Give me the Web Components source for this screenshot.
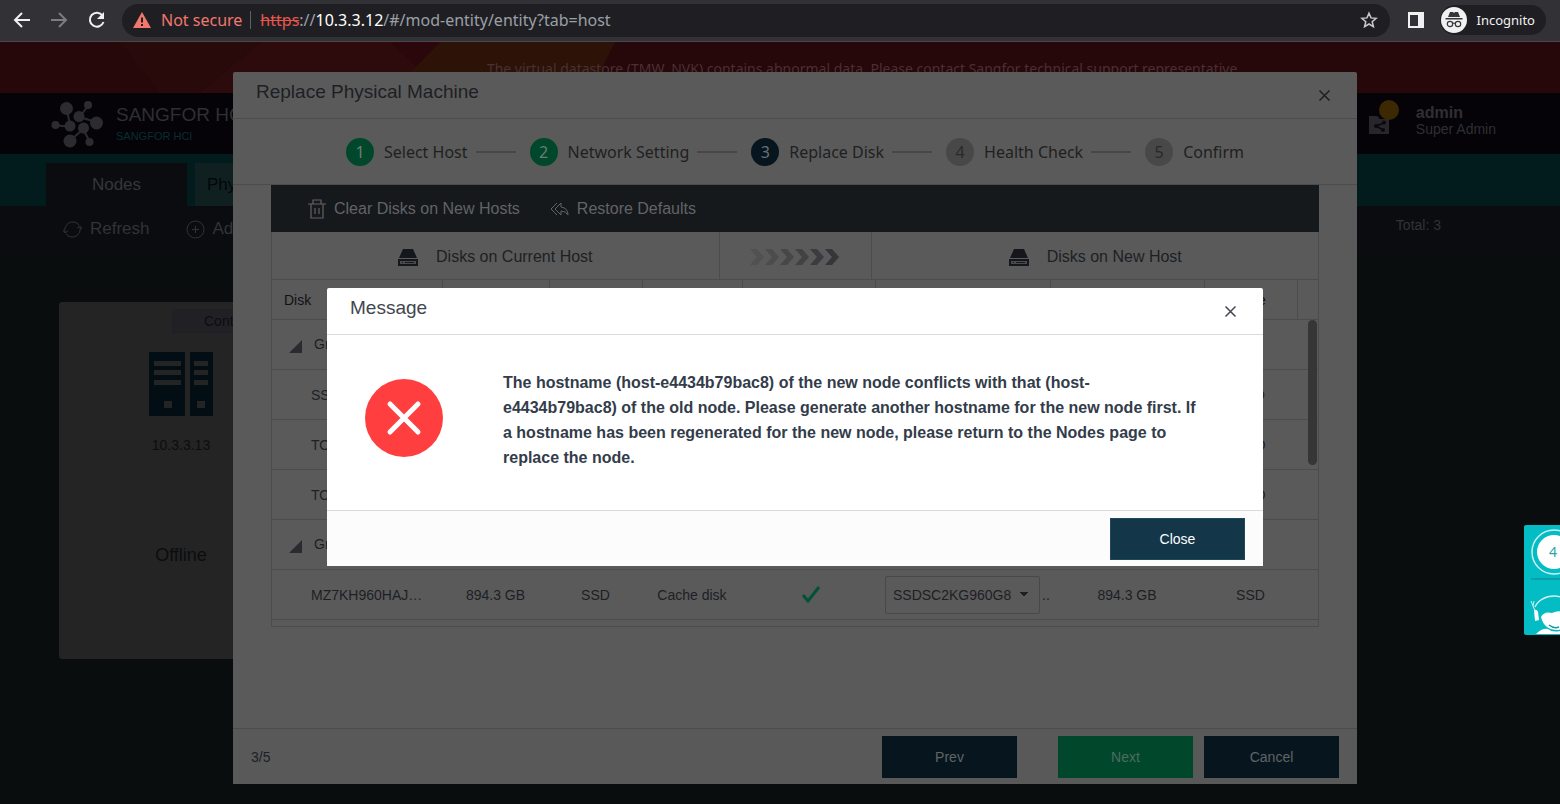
<!DOCTYPE html>
<html lang="en">
<head>
<meta charset="utf-8">
<title>SANGFOR HCI</title>
<style>
  html, body {
    height: 100%;
    margin: 0;
  }

  body {
    display: flex;
    flex-direction: column;
    overflow: hidden;
    background: #090d0e;
    font-family: "Liberation Sans", Arial, sans-serif;
    font-size: 14px;
    color: #1d1f24;
  }
</style>
</head>
<body>
<browser-bar></browser-bar>
<hci-shell>
  <alert-banner>The virtual datastore (TMW, NVK) contains abnormal data. Please contact Sangfor technical support representative.</alert-banner>
  <app-header></app-header>
  <nav-tabs></nav-tabs>
  <node-toolbar></node-toolbar>
  <node-card ip="10.3.3.13" state="Offline"></node-card>

  <modal-dialog slot="wizard" heading="Replace Physical Machine" dimmed>
    <wizard-steps></wizard-steps>
    <disk-toolbar></disk-toolbar>
    <disk-table></disk-table>
    <span slot="info">3/5</span>
    <action-button slot="actions" kind="dim" class="prev">Prev</action-button>
    <action-button slot="actions" kind="next">Next</action-button>
    <action-button slot="actions" kind="dim">Cancel</action-button>
  </modal-dialog>

  <modal-dialog slot="message" heading="Message">
    <error-message>The hostname (host-e4434b79bac8) of the new node conflicts with that (host-e4434b79bac8) of the old node. Please generate another hostname for the new node first. If a hostname has been regenerated for the new node, please return to the Nodes page to replace the node.</error-message>
    <action-button slot="actions">Close</action-button>
  </modal-dialog>

  <support-widget slot="support" count="4"></support-widget>
</hci-shell>

<script>
'use strict';

const render = (host, html) => {
  const template = document.createElement('template');
  template.innerHTML = html;
  host.attachShadow({ mode: 'open' }).appendChild(template.content.cloneNode(true));
};

class BrowserBar extends HTMLElement {
  constructor() {
    super();
    render(this, `
      <style>
        :host {
          display: flex;
          flex: none;
          align-items: center;
          box-sizing: border-box;
          height: 42px;
          padding: 0 14px 1px 11px;
          background: #313136;
          border-bottom: 1px solid #4a484c;
          font-family: "Noto Sans", "Open Sans", sans-serif;
          font-size: 16px;
          color: #9aa0a6;
        }
        button {
          display: flex;
          padding: 0;
          border: 0;
          background: none;
          font: inherit;
          color: #f1f1f1;
        }
        .nav {
          display: flex;
          gap: 17px;
          margin-right: 15px;
        }
        .address {
          display: flex;
          flex: 1;
          align-items: center;
          height: 33px;
          padding: 0 12px 0 10px;
          border-radius: 17px;
          background: #1f1f23;
        }
        .warn {
          align-items: center;
          gap: 9px;
          margin-right: 9px;
          padding-right: 8px;
          border-right: 1px solid #5f6064;
          line-height: 18px;
          color: #f2776d;
        }
        label { white-space: pre; }
        s { color: #e8554c; }
        b { font-weight: 400; color: #fff; }
        input {
          flex: 1;
          min-width: 0;
          padding: 0;
          border: 0;
          outline: 0;
          background: none;
          font: inherit;
          color: inherit;
        }
        .panel { margin: 0 15px 0 17px; }
        .incognito {
          align-items: center;
          gap: 10px;
          height: 30px;
          padding: 0 11px 0 1px;
          border-radius: 15px;
          background: #1f1f23;
          font-size: 13px;
        }
      </style>
      <div class="nav">
        <button aria-label="Back"><svg width="21" height="20" viewBox="0 0 21 20" fill="none" stroke="currentColor" stroke-width="2"><path d="M19 10H4M11 3L4 10l7 7"/></svg></button>
        <button aria-label="Forward" style="color:#7d7d80"><svg width="21" height="20" viewBox="0 0 21 20" fill="none" stroke="currentColor" stroke-width="2"><path d="M2 10h15M10 3l7 7-7 7"/></svg></button>
        <button aria-label="Reload"><svg width="20" height="20" viewBox="0 0 20 20" fill="none" stroke="currentColor" stroke-width="2"><path d="M15.500 5.500A7 7 0 1 0 16.500 12"/><path d="M17 2v7h-7z" fill="currentColor" stroke="none"/></svg></button>
      </div>
      <div class="address">
        <button class="warn"><svg width="20" height="18" viewBox="0 0 20 18"><path d="M10 1l9 16H1z" fill="#f2776d"/><path d="M10 6.500v5M10 13v2" stroke="#1f1f23" stroke-width="2"/></svg>Not secure</button>
        <label for="url"><s>https</s>://<b>10.3.3.12</b></label>
        <input id="url" value="/#/mod-entity/entity?tab=host">
        <button aria-label="Bookmark"><svg width="18" height="18" viewBox="0 0 18 18" fill="none" stroke="#c8c9cc" stroke-width="1.500"><path d="M9 2.200l2 4.700 5.100.4-3.900 3.400 1.200 5L9 13l-4.400 2.700 1.200-5L1.900 7.300 7 6.900z"/></svg></button>
      </div>
      <button class="panel" aria-label="Side panel"><svg width="18" height="18" viewBox="0 0 18 18"><path d="M1 1h16v16H1zM3 4v11h8V4z" fill="#f1f1f1" fill-rule="evenodd"/></svg></button>
      <button class="incognito">
        <svg width="26" height="26" viewBox="0 0 26 26"><circle cx="13" cy="13" r="13" fill="#f1f1f1"/><path d="M9 5h3l1 1 1-1h3l2 5H7zM4.500 11h17v1.500h-17z" fill="#36363a"/><g fill="none" stroke="#36363a" stroke-width="1.200"><circle cx="9" cy="17" r="2.700"/><circle cx="17" cy="17" r="2.700"/><path d="M11.700 16.500q1.300-1 2.600 0"/></g></svg>
        Incognito
      </button>
    `);
  }
}

/* Page area under the browser bar; runs a little past the right edge of the window */
class HciShell extends HTMLElement {
  constructor() {
    super();
    render(this, `
      <style>
        :host {
          position: relative;
          display: block;
          flex: 1;
          min-height: 0;
          width: calc(100% + 30px);
        }
        .layer {
          position: absolute;
          inset: 0;
          display: grid;
          justify-items: center;
          padding: 30px 20px 20px;
        }
        .wizard ::slotted(*) {
          width: 100%;
          max-width: 1124px;
        }
        .message {
          align-items: center;
          padding-bottom: 22px;
        }
        .message ::slotted(*) {
          width: 80%;
          max-width: 936px;
        }
        .support {
          position: absolute;
          right: 0;
          bottom: 169px;
        }
      </style>
      <slot></slot>
      <div class="layer wizard"><slot name="wizard"></slot></div>
      <div class="layer message"><slot name="message"></slot></div>
      <div class="support"><slot name="support"></slot></div>
    `);
  }
}

class AlertBanner extends HTMLElement {
  constructor() {
    super();
    render(this, `
      <style>
        :host {
          display: grid;
          height: 51px;
          background: #26070a;
          font-family: "Noto Sans", "Open Sans", sans-serif;
          font-size: 14px;
          line-height: 53px;
          text-align: center;
          color: #4a3033;
        }
        svg, p { grid-area: 1 / 1; }
        p {
          margin: 0;
          padding-left: 138px;
          white-space: nowrap;
        }
      </style>
      <svg width="640" height="51" viewBox="0 0 640 51">
        <path d="M120 0h140l-60 51h-40z" fill="#290a0a"/>
        <path d="M260 0h130l26 24-13 27H200z" fill="#2d0b0c"/>
        <path d="M390 0h50l-24 24z" fill="#2b060a"/>
        <path d="M440 0h175l-25 51H390z" fill="#2d1208"/>
      </svg>
      <p><slot></slot></p>
    `);
  }
}

class AppHeader extends HTMLElement {
  constructor() {
    super();
    render(this, `
      <style>
        :host {
          display: flex;
          align-items: center;
          height: 61px;
          padding: 0 94px 0 50px;
          background: #050308;
          color: #2f2f32;
        }
        .brand {
          flex: 1;
          margin-left: 11px;
          font-size: 19px;
          line-height: 24px;
        }
        small {
          display: block;
          font-size: 11px;
          line-height: 18px;
          color: #052f2f;
        }
        .user {
          margin: 0 0 6px 15px;
          line-height: 17px;
        }
        b {
          display: block;
          font-size: 16px;
        }
      </style>
      <svg width="55" height="50" viewBox="0 0 55 50" fill="#2c2c2f" stroke="#2c2c2f" stroke-width="2">
        <path d="M16.500 9l4 19M20.500 28L5 26M38 7l-8.500 11M29.500 18L46 23M33 30l-13 12M33 30l7 13" fill="none"/>
        <g stroke="none"><circle cx="16.500" cy="9.500" r="6.500"/><circle cx="38" cy="6" r="4"/><circle cx="29" cy="17.500" r="5.500"/><circle cx="46.500" cy="24" r="6.500"/><circle cx="5.500" cy="26" r="4"/><circle cx="20" cy="27" r="5.500"/><circle cx="33.500" cy="29" r="5.500"/><circle cx="20" cy="42" r="6.500"/><circle cx="39.500" cy="43" r="4"/></g>
      </svg>
      <div class="brand">SANGFOR HCI<small>SANGFOR HCI</small></div>
      <svg width="32" height="50" viewBox="0 0 32 50">
        <path d="M0 17h8l3 3h9v15H0z" fill="#27272b"/>
        <path d="M15 24l-8 3 7 4" fill="none" stroke="#09090d" stroke-width="1.500"/>
        <g fill="#09090d"><circle cx="15" cy="23.500" r="2"/><circle cx="7" cy="27" r="2"/><circle cx="14" cy="31" r="2"/></g>
        <circle cx="20" cy="11" r="10" fill="#3c2904"/>
      </svg>
      <div class="user"><b>admin</b>Super Admin</div>
    `);
  }
}

class NavTabs extends HTMLElement {
  constructor() {
    super();
    render(this, `
      <style>
        :host {
          display: flex;
          align-items: flex-end;
          gap: 8px;
          height: 52px;
          padding-left: 46px;
          background: #021b1c;
        }
        a {
          width: 141px;
          font-size: 17px;
          line-height: 43px;
          text-align: center;
          text-decoration: none;
          color: #010708;
          background: #102021;
        }
        a.active {
          color: #35373a;
          background: #0a0c0f;
        }
        a + a {
          padding-left: 12px;
          text-align: left;
        }
      </style>
      <a href="#nodes" class="active">Nodes</a>
      <a href="#physical">Physical</a>
    `);
  }
}

class NodeToolbar extends HTMLElement {
  constructor() {
    super();
    render(this, `
      <style>
        :host {
          display: flex;
          align-items: center;
          gap: 36px;
          height: 46px;
          padding: 0 149px 0 63px;
          background: #0a0c0f;
          color: #313336;
        }
        button {
          display: flex;
          align-items: center;
          gap: 8px;
          padding: 0;
          border: 0;
          background: none;
          font: inherit;
          font-size: 17px;
          color: inherit;
        }
        svg { fill: none; stroke: currentColor; }
        .total {
          flex: 1;
          padding-bottom: 8px;
          text-align: right;
        }
      </style>
      <button><svg width="19" height="19" viewBox="0 0 19 19"><path d="M2 12A8 8 0 0 1 16 5M17 7a8 8 0 0 1-14 7M0 10l2 3 3-2M14 8l3-2 2 3"/></svg>Refresh</button>
      <button><svg width="19" height="19" viewBox="0 0 19 19"><circle cx="9.500" cy="9.500" r="8.500"/><path d="M9.500 6v7M6 9.500h7"/></svg>Add</button>
      <span class="total">Total: 3</span>
    `);
  }
}

class NodeCard extends HTMLElement {
  constructor() {
    super();
    render(this, `
      <style>
        :host {
          display: flex;
          flex-direction: column;
          align-items: center;
          box-sizing: border-box;
          width: 244px;
          height: 357px;
          margin: 50px 0 0 59px;
          padding-top: 7px;
          border-radius: 3px;
          background: #242424;
          color: #0c0d10;
        }
        .role {
          box-sizing: border-box;
          align-self: flex-end;
          width: 131px;
          height: 24px;
          padding-left: 31px;
          border: 1px solid #1f1f26;
          background: #212125;
          line-height: 22px;
        }
        svg { margin: 19px 0 21px; }
        .state {
          margin-top: 92px;
          font-size: 18px;
        }
      </style>
      <span class="role">Controller</span>
      <svg width="64" height="64" viewBox="0 0 64 64">
        <path d="M0 0h36v64H0zM41 0h23v64H41z" fill="#030d14"/>
        <path d="M5 9h27v5H5zM5 18h27v5H5zM5 28h27v5H5zM45 9h14v5H45zM45 18h14v5H45zM45 28h14v5H45zM15 49h8v7h-8zM48 49h8v7h-8z" fill="#242424"/>
      </svg>
      <span>${this.getAttribute('ip')}</span>
      <span class="state">${this.getAttribute('state')}</span>
    `);
  }
}

class ModalDialog extends HTMLElement {
  constructor() {
    super();
    render(this, `
      <style>
        :host {
          display: flex;
          flex-direction: column;
          border-radius: 2px;
          background: #fff;
          --line: #d9dadb;
          color: #41464f;
        }
        :host([dimmed]) {
          background: #5a5a5a;
          --line: #4c4c4d;
          --foot: #595959;
          color: #1d1f24;
        }
        header {
          display: flex;
          justify-content: space-between;
          height: 46px;
          padding: 0 24px 0 23px;
          border-bottom: 1px solid var(--line);
        }
        h2 {
          margin: 0;
          font-size: 19px;
          font-weight: 400;
          line-height: 40px;
        }
        header button {
          padding: 0;
          border: 0;
          background: none;
          color: inherit;
        }
        header svg { display: block; }
        .content {
          flex: 1;
          min-height: 0;
        }
        footer {
          display: flex;
          align-items: center;
          gap: 11px;
          height: 55px;
          padding: 0 18px;
          border-top: 1px solid var(--line);
          background: var(--foot, #fcfcfc);
        }
        .info { flex: 1; }
      </style>
      <header>
        <h2>${this.getAttribute('heading')}</h2>
        <button aria-label="Close dialog"><svg width="17" height="17" viewBox="0 0 17 17" stroke="currentColor" stroke-width="1.500"><path d="M3.500 3.500l10 10M13.500 3.500l-10 10"/></svg></button>
      </header>
      <div class="content"><slot></slot></div>
      <footer>
        <div class="info"><slot name="info"></slot></div>
        <slot name="actions"></slot>
      </footer>
    `);
  }
}

class ActionButton extends HTMLElement {
  constructor() {
    super();
    render(this, `
      <style>
        :host { display: block; }
        :host(.prev) { margin-right: 30px; }
        button {
          display: block;
          width: 135px;
          height: 42px;
          padding: 0;
          border: 1px solid #1c4a5a;
          background: #133649;
          font: inherit;
          color: #fff;
        }
        :host([kind="dim"]) button {
          border-color: #06151b;
          background: #07161e;
          color: #5f6467;
        }
        :host([kind="next"]) button {
          border-color: #00472b;
          background: #00472b;
          color: #4c6d5f;
        }
      </style>
      <button><slot></slot></button>
    `);
  }
}

const steps = [
  ['Select Host', 'done'],
  ['Network Setting', 'done'],
  ['Replace Disk', 'current'],
  ['Health Check', ''],
  ['Confirm', ''],
];

class WizardSteps extends HTMLElement {
  constructor() {
    super();
    render(this, `
      <style>
        :host { display: block; }
        ol {
          display: flex;
          justify-content: center;
          align-items: center;
          height: 65px;
          margin: 0;
          padding: 0;
          border-bottom: 1px solid #4c4c4d;
          list-style-type: none;
          font-family: "Noto Sans", "Open Sans", sans-serif;
          font-size: 16px;
          color: #1f1f21;
        }
        li {
          display: flex;
          align-items: center;
        }
        i {
          width: 28px;
          margin-right: 10px;
          border-radius: 50%;
          background: #484848;
          font-style: normal;
          line-height: 28px;
          text-align: center;
          color: #29292b;
        }
        .done i { background: #00472b; color: #6a7d74; }
        .current i { background: #07161e; color: #6a7075; }
        li:not(:last-child)::after {
          width: 40px;
          height: 2px;
          margin: 0 14px 0 8px;
          background: #474747;
          content: "";
        }
      </style>
      <ol>
        ${steps.map(([name, state], i) => `<li class="${state}"><i>${i + 1}</i>${name}</li>`).join('')}
      </ol>
    `);
  }
}

class DiskToolbar extends HTMLElement {
  constructor() {
    super();
    render(this, `
      <style>
        :host {
          display: flex;
          align-items: center;
          gap: 30px;
          height: 47px;
          margin: 0 38px;
          padding-left: 37px;
          background: #15191c;
          color: #626365;
        }
        button {
          display: flex;
          align-items: center;
          gap: 8px;
          padding: 0;
          border: 0;
          background: none;
          font: inherit;
          font-size: 16px;
          color: inherit;
        }
        svg { fill: none; stroke: currentColor; }
      </style>
      <button><svg width="18" height="20" viewBox="0 0 18 20"><path d="M0 5h18M5 5V1h8v4M3 5v14h12V5M7 9v6M11 9v6" stroke-width="1.200"/></svg>Clear Disks on New Hosts</button>
      <button><svg width="19" height="16" viewBox="0 0 19 16"><path d="M7 2L1 8l6 6M11 2L5 8l6 6v-4q5 0 7 4 0-7-7-8z"/></svg>Restore Defaults</button>
    `);
  }
}

const disks = [
  { group: 'Group 1' },
  { name: 'SSDSC2KG', type: 'SSD' },
  { name: 'TOSHIBA', type: 'HDD' },
  { name: 'TOSHIBA', type: 'HDD' },
  { group: 'Group 2' },
  { name: 'MZ7KH960HAJ…', size: '894.3 GB', oldType: 'SSD', use: 'Cache disk', target: 'SSDSC2KG960G8', type: 'SSD' },
];

const diskIcon = '<svg width="20" height="17" viewBox="0 0 20 17"><path d="M5 0h10l4 9H1zM0 10h20v7H0z" fill="#15171c"/><path d="M2 12h16v3H2z" fill="#4b4b4e"/><path d="M4 13.500h1M7 13.500h9" stroke="#17191e"/></svg>';

const diskRow = (disk) => {
  if (disk.group) {
    return `<tr><td colspan="9" class="group"><svg width="13" height="13" viewBox="0 0 13 13"><path d="M13 0v13H0z" fill="#2a2b2e"/></svg>${disk.group}</td></tr>`;
  }
  const replace = disk.target
    ? `<div class="target"><select aria-label="New disk"><option>${disk.target}</option></select><span>..</span></div>`
    : '';
  const tick = disk.target
    ? '<svg width="18" height="17" viewBox="0 0 18 17"><path d="M1 9l5 6L17 1" fill="none" stroke="#005335" stroke-width="3"/></svg>'
    : '';
  return `
    <tr>
      <td class="name">${disk.name}</td>
      <td>${disk.size || ''}</td>
      <td>${disk.oldType || ''}</td>
      <td>${disk.use || ''}</td>
      <td class="tick">${tick}</td>
      <td class="pick">${replace}</td>
      <td>${disk.size || ''}</td>
      <td>${disk.type}</td>
      <td></td>
    </tr>`;
};

class DiskTable extends HTMLElement {
  constructor() {
    super();
    render(this, `
      <style>
        :host {
          position: relative;
          display: block;
          margin: 0 38px;
          padding-bottom: 6px;
          border: 1px solid #4c4c4d;
          border-top: 0;
        }
        .hosts {
          display: grid;
          grid-template-columns: 447fr 153fr 447fr;
          height: 47px;
          border-bottom: 1px solid #4c4c4d;
          font-size: 16px;
        }
        .hosts > div {
          display: flex;
          align-items: center;
          justify-content: center;
          gap: 18px;
          padding-top: 3px;
        }
        .hosts > div + div { border-left: 1px solid #4c4c4d; }
        table {
          width: 100%;
          border-collapse: collapse;
          table-layout: fixed;
        }
        th, td {
          padding: 0;
          border-bottom: 1px solid #4c4c4d;
          font-weight: 400;
          text-align: center;
          white-space: nowrap;
        }
        th { height: 39px; color: #101216; }
        th + th { border-left: 1px solid #4c4c4d; }
        th:first-child { padding-left: 12px; text-align: left; }
        td { height: 49px; }
        td.name { padding-left: 39px; text-align: left; }
        td.group { padding-left: 17px; text-align: left; }
        .group svg {
          margin-right: 12px;
          vertical-align: -4px;
        }
        td.tick { padding-left: 4px; }
        td.pick { padding-left: 10px; }
        td svg { vertical-align: middle; }
        .target {
          display: flex;
          align-items: center;
          gap: 2px;
        }
        select {
          width: 155px;
          height: 38px;
          padding: 0 25px 0 7px;
          border: 1px solid #484849;
          border-radius: 2px;
          appearance: none;
          background:
            linear-gradient(to bottom right, #1d1f24 50%, transparent 50%) right 10px center / 5px 5px no-repeat,
            linear-gradient(to bottom left, #1d1f24 50%, transparent 50%) right 15px center / 5px 5px no-repeat;
          font: inherit;
          color: inherit;
        }
        .thumb {
          position: absolute;
          top: 88px;
          right: 1px;
          width: 9px;
          height: 145px;
          border-radius: 5px;
          background: #363636;
        }
      </style>
      <div class="hosts">
        <div>${diskIcon}Disks on Current Host</div>
        <div>
          <svg width="90" height="16" viewBox="0 0 90 16">
            ${['#515151', '#4c4c4d', '#474749', '#424244', '#3c3c40', '#35353a']
              .map((fill, i) => `<path transform="translate(${i * 15} 0)" d="M0 0h7l7 8-7 8H0l7-8z" fill="${fill}"/>`)
              .join('')}
          </svg>
        </div>
        <div>${diskIcon}Disks on New Host</div>
      </div>
      <table>
        <colgroup>
          ${[170, 107, 93, 100, 133, 175, 154, 93, 21]
            .map((width) => `<col style="width:calc(100% * ${width} / 1046)">`)
            .join('')}
        </colgroup>
        <thead>
          <tr><th>Disk</th><th></th><th></th><th></th><th></th><th></th><th></th><th>Type</th><th></th></tr>
        </thead>
        <tbody>${disks.map(diskRow).join('')}</tbody>
      </table>
      <div class="thumb"></div>
    `);
  }
}

class ErrorMessage extends HTMLElement {
  constructor() {
    super();
    render(this, `
      <style>
        :host {
          display: flex;
          gap: 60px;
          padding: 35px 62px 40px 38px;
          color: #333c4a;
        }
        svg {
          flex: none;
          margin-top: 9px;
        }
        p {
          margin: 0;
          font-size: 16px;
          font-weight: 700;
          line-height: 25px;
        }
      </style>
      <svg width="78" height="78" viewBox="0 0 78 78">
        <circle cx="39" cy="39" r="39" fill="#ff3e3f"/>
        <path d="M25 25l28 28M53 25L25 53" stroke="#fff" stroke-width="5" stroke-linecap="round"/>
      </svg>
      <p><slot></slot></p>
    `);
  }
}

class SupportWidget extends HTMLElement {
  constructor() {
    super();
    render(this, `
      <style>
        :host {
          display: block;
          width: 66px;
          height: 110px;
          border-radius: 2px;
          background: #03bcc4;
        }
        svg { display: block; }
        text { font: 14px "Noto Sans", sans-serif; }
      </style>
      <svg width="66" height="110" viewBox="0 0 66 110">
        <circle cx="30" cy="27" r="22" fill="none" stroke="#c9f2f4" stroke-width="1.500"/>
        <circle cx="30" cy="27" r="17" fill="#fff"/>
        <text x="25" y="32" fill="#2aa6ad">${this.getAttribute('count')}</text>
        <path d="M7 54h52" stroke="#12828b"/>
        <path d="M11 82a20 16 0 0 1 38 0" fill="none" stroke="#c9f2f4" stroke-width="1.500"/>
        <path d="M7 76l4 10M10 76l-1 5" stroke="#c9f2f4" fill="none"/>
        <path d="M10 85q3-1 4 2l1 8-4 1z" fill="#fff"/>
        <path d="M17 92q3-6 11-4 8-4 15 1 3 14-9 16-14 0-17-13z" fill="#fff"/>
        <path d="M12 109q6-6 12-5 6 5 18 0l8 5z" fill="#fff"/>
        <path d="M25 100q5 4 10 2" stroke="#1797a0" stroke-width="1.500" fill="none"/>
      </svg>
    `);
  }
}

customElements.define('browser-bar', BrowserBar);
customElements.define('hci-shell', HciShell);
customElements.define('alert-banner', AlertBanner);
customElements.define('app-header', AppHeader);
customElements.define('nav-tabs', NavTabs);
customElements.define('node-toolbar', NodeToolbar);
customElements.define('node-card', NodeCard);
customElements.define('modal-dialog', ModalDialog);
customElements.define('action-button', ActionButton);
customElements.define('wizard-steps', WizardSteps);
customElements.define('disk-toolbar', DiskToolbar);
customElements.define('disk-table', DiskTable);
customElements.define('error-message', ErrorMessage);
customElements.define('support-widget', SupportWidget);
</script>
</body>
</html>
